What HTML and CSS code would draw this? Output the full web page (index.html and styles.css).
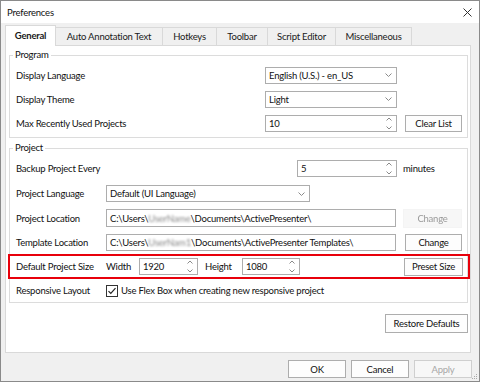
FILE: index.html
```html
<!DOCTYPE html>
<html>
<head>
<meta charset="utf-8">
<link rel="stylesheet" href="styles.css">
</head>
<body>
<div class="window">
  <div class="titlebar">
    <span class="title">Preferences</span>
    <svg class="close" width="9" height="9" viewBox="0 0 9 9"><path d="M0.5 0.5 L8.5 8.5 M8.5 0.5 L0.5 8.5" stroke="#333" stroke-width="1" fill="none"/></svg>
  </div>
  <div class="tabs">
    <div class="tab active t-general">General</div>
    <div class="tab t-auto">Auto Annotation Text</div>
    <div class="tab t-hot">Hotkeys</div>
    <div class="tab t-tool">Toolbar</div>
    <div class="tab t-script">Script Editor</div>
    <div class="tab t-misc">Miscellaneous</div>
  </div>
  <div class="panel">
    <div class="group group-program">
      <div class="legend">Program</div>
      <div class="row h24">
        <div class="label lw-prog">Display Language</div>
        <div class="field w132"><span>English (U.S.) - en_US</span><svg width="7" height="4" viewBox="0 0 7 4"><path d="M0.5 0.5 L3.5 3.5 L6.5 0.5" fill="none" stroke="#8a8a8a"/></svg></div>
      </div>
      <div class="row h24">
        <div class="label lw-prog">Display Theme</div>
        <div class="field w132"><span>Light</span><svg width="7" height="4" viewBox="0 0 7 4"><path d="M0.5 0.5 L3.5 3.5 L6.5 0.5" fill="none" stroke="#8a8a8a"/></svg></div>
      </div>
      <div class="row h24">
        <div class="label lw-prog">Max Recently Used Projects</div>
        <div class="field w132"><span>10</span><svg width="6" height="13" viewBox="0 0 6 13"><path d="M0.5 3.5 L3 1 L5.5 3.5 M0.5 9.5 L3 12 L5.5 9.5" fill="none" stroke="#8a8a8a"/></svg></div>
        <div class="btn btn-clear">Clear List</div>
      </div>
    </div>

    <div class="group group-project">
      <div class="legend">Project</div>
      <div class="row h25">
        <div class="label lw-backup">Backup Project Every</div>
        <div class="field w100"><span>5</span><svg width="6" height="13" viewBox="0 0 6 13"><path d="M0.5 3.5 L3 1 L5.5 3.5 M0.5 9.5 L3 12 L5.5 9.5" fill="none" stroke="#8a8a8a"/></svg></div>
        <span class="unit">minutes</span>
      </div>
      <div class="row h25">
        <div class="label lw-proj">Project Language</div>
        <div class="field w204"><span>Default (UI Language)</span><svg width="7" height="4" viewBox="0 0 7 4"><path d="M0.5 0.5 L3.5 3.5 L6.5 0.5" fill="none" stroke="#8a8a8a"/></svg></div>
      </div>
      <div class="row h24">
        <div class="label lw-proj">Project Location</div>
        <div class="field w290 tall"><span>C:\Users\<span class="blur">UserName</span>\Documents\ActivePresenter\</span></div>
        <div class="btn btn-change disabled"><span class="ghost">Change</span></div>
      </div>
      <div class="row h24">
        <div class="label lw-proj">Template Location</div>
        <div class="field w290"><span>C:\Users\<span class="blur">UserNam1</span>\Documents\ActivePresenter Templates\</span></div>
        <div class="btn btn-change">Change</div>
      </div>
      <div class="row h25 highlight">
        <div class="label lw-proj">Default Project Size</div>
        <span class="size-label">Width</span>
        <div class="field w59"><span>1920</span><svg width="6" height="13" viewBox="0 0 6 13"><path d="M0.5 3.5 L3 1 L5.5 3.5 M0.5 9.5 L3 12 L5.5 9.5" fill="none" stroke="#8a8a8a"/></svg></div>
        <span class="size-label height-label">Height</span>
        <div class="field w58"><span>1080</span><svg width="6" height="13" viewBox="0 0 6 13"><path d="M0.5 3.5 L3 1 L5.5 3.5 M0.5 9.5 L3 12 L5.5 9.5" fill="none" stroke="#8a8a8a"/></svg></div>
        <div class="btn btn-preset">Preset Size</div>
      </div>
      <div class="row h23">
        <div class="label lw-proj">Responsive Layout</div>
        <svg class="check" width="12" height="12" viewBox="0 0 12 12"><rect x="0.5" y="0.5" width="11" height="11" fill="#fff" stroke="#333"/><path d="M2.5 6.2 L4.8 8.5 L9.5 3.2" fill="none" stroke="#222" stroke-width="1.2"/></svg>
        <span class="check-text">Use Flex Box when creating new responsive project</span>
      </div>
    </div>

    <div class="actions">
      <div class="btn btn-restore">Restore Defaults</div>
    </div>
  </div>
  <div class="footer">
    <div class="btn btn-foot">OK</div>
    <div class="btn btn-foot">Cancel</div>
    <div class="btn btn-foot btn-disabled">Apply</div>
  </div>
  <svg class="grip" width="6" height="6" viewBox="0 0 6 6"><rect x="4" y="0" width="1" height="1" fill="#aaa"/><rect x="2" y="2" width="1" height="1" fill="#aaa"/><rect x="4" y="2" width="1" height="1" fill="#aaa"/><rect x="0" y="4" width="1" height="1" fill="#aaa"/><rect x="2" y="4" width="1" height="1" fill="#aaa"/><rect x="4" y="4" width="1" height="1" fill="#aaa"/></svg>
</div>
</body>
</html>
```

FILE: styles.css
```css
* { box-sizing: border-box; }
html, body { margin: 0; padding: 0; }
body {
  width: 480px;
  height: 382px;
  overflow: hidden;
  background: #f0f0f0;
  font-family: Lato, "Liberation Sans", sans-serif;
  font-size: 9.5px;
  letter-spacing: -0.22px;
  color: #111;
}
.window {
  position: relative;
  width: 480px;
  height: 382px;
  border: 1px solid #8a8a8a;
  background: #f0f0f0;
  display: flex;
  flex-direction: column;
}
.titlebar {
  height: 22px;
  flex: none;
  background: #fff;
  display: flex;
  align-items: center;
  justify-content: space-between;
  padding: 0 7px 0 6px;
}
.close { display: block; }
.tabs {
  height: 23px;
  flex: none;
  display: flex;
  align-items: flex-end;
  padding-left: 4px;
}
.tab {
  height: 18px;
  margin-bottom: 1px;
  border-top: 1px solid #d9d9d9;
  border-right: 1px solid #d9d9d9;
  background: #f0f0f0;
  display: flex;
  align-items: center;
  justify-content: center;
  color: #1a1a1a;
}
.tab.active {
  position: relative;
  z-index: 1;
  height: 21px;
  margin-bottom: 0;
  border-left: 1px solid #d9d9d9;
  background: #fff;
  font-weight: bold;
  padding-bottom: 1px;
}
.t-general { width: 51px; }
.t-auto { width: 107px; }
.t-hot { width: 54px; }
.t-tool { width: 51px; }
.t-script { width: 68px; }
.t-misc { width: 76px; }

.panel {
  flex: none;
  margin: -1px 0 0 4px;
  width: 466px;
  height: 308px;
  background: #fff;
  border: 1px solid #d9d9d9;
  padding: 0 0 0 3px;
}
.group {
  width: 459px;
  border: 1px solid #dcdcdc;
  padding: 0 0 0 6px;
}
.group-program { margin-top: 9px; padding-bottom: 2px; }
.group-project { margin-top: 10px; }
.legend {
  height: 14px;
  line-height: 14px;
  margin: -8px 0 1px -3px;
  padding: 0 2px;
  background: #fff;
  width: max-content;
}
.row { display: flex; align-items: center; }
.h23 { height: 23px; }
.h24 { height: 24px; }
.h25 { height: 25px; }
.label { flex: none; white-space: nowrap; }
.lw-prog { width: 249px; }
.lw-backup { width: 281px; }
.lw-proj { width: 90px; }

.field {
  flex: none;
  height: 17px;
  border: 1px solid #adadad;
  background: #fff;
  display: flex;
  align-items: center;
  justify-content: space-between;
  padding: 0 4px 0 3px;
  white-space: nowrap;
  overflow: hidden;
}
.field svg { display: block; flex: none; }
.field.tall { height: 18px; }
.w58 { width: 58px; }
.w59 { width: 59px; }
.w100 { width: 100px; }
.w132 { width: 132px; }
.w204 { width: 204px; }
.w290 { width: 290px; }

.blur {
  color: #8a8a8a;
  filter: blur(1.3px);
  display: inline-block;
}

.btn {
  flex: none;
  height: 17px;
  border: 1px solid #adadad;
  background: #fdfdfd;
  display: flex;
  align-items: center;
  justify-content: center;
  white-space: nowrap;
  color: #111;
}
.btn-clear { width: 57px; margin-left: 8px; }
.btn-change { width: 57px; margin-left: 9px; }
.btn-change.disabled {
  width: 59px;
  height: 19px;
  margin-left: 7px;
  border-color: #f4f4f4;
  background: #f7f7f7;
}
.ghost { color: #9a9a9a; filter: blur(0.7px); }
.unit { margin-left: 6px; }

.highlight {
  margin: 0 -3px 0 -8px;
  border: 2px solid #e8000b;
  padding: 0 5px 0 6px;
}
.size-label { width: 33px; flex: none; }
.height-label { width: 37px; margin-left: 7px; }
.btn-preset { width: 59px; margin-left: auto; height: 18px; }

.check { display: block; flex: none; }
.check-text { margin-left: 3px; }

.actions {
  width: 459px;
  display: flex;
  justify-content: flex-end;
  margin-top: 11px;
}
.btn-restore { width: 83px; height: 19px; }

.footer {
  flex: none;
  display: flex;
  justify-content: flex-end;
  gap: 5px;
  padding: 7px 7px 0 0;
}
.btn-foot { width: 58px; height: 18px; }
.btn-disabled { color: #a8a8a8; border-color: #cfcfcf; background: #f7f7f7; }
.grip { position: absolute; right: 1px; bottom: 1px; display: block; }
```
